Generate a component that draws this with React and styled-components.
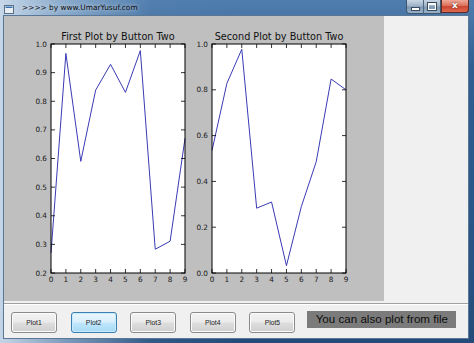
import React from 'react';
import styled, { createGlobalStyle } from 'styled-components';

const GlobalStyle = createGlobalStyle`
  html, body {
    margin: 0;
    padding: 0;
    width: 474px;
    height: 343px;
    overflow: hidden;
    background: #24507f;
  }
`;

const plots = [
  {
    title: 'First Plot by Button Two',
    min: 0.2,
    max: 1.0,
    step: 0.1,
    data: [0.27, 0.967, 0.59, 0.839, 0.929, 0.831, 0.977, 0.283, 0.311, 0.67]
  },
  {
    title: 'Second Plot by Button Two',
    min: 0,
    max: 1.0,
    step: 0.2,
    data: [0.535, 0.828, 0.977, 0.283, 0.31, 0.032, 0.29, 0.486, 0.847, 0.8]
  }
];

const buttons = ['Plot1', 'Plot2', 'Plot3', 'Plot4', 'Plot5'];

// axes geometry inside each subplot svg
const AX = { left: 18, top: 28, width: 134, height: 229 };

const Subplot = ({ title, min, max, step, data }) => {
  const sx = i => AX.left + (i / 9) * AX.width;
  const sy = v => AX.top + ((max - v) / (max - min)) * AX.height;
  const count = Math.round((max - min) / step);
  const yTicks = Array.from({ length: count + 1 }, (_, i) => min + i * step);
  const xTicks = Array.from({ length: 10 }, (_, i) => i);
  const right = AX.left + AX.width;
  const bottom = AX.top + AX.height;
  const points = data.map((v, i) => `${sx(i)},${sy(v)}`).join(' ');

  return (
    <PlotSvg width="158" height="285" viewBox="0 0 158 285">
      <rect x={AX.left} y={AX.top} width={AX.width} height={AX.height} fill="#fff" />
      <polyline points={points} fill="none" stroke="#3a3ab4" strokeWidth="1" />
      {yTicks.map(v => (
        <g key={v}>
          <line x1={AX.left} x2={AX.left + 4} y1={sy(v)} y2={sy(v)} stroke="#000" strokeWidth="0.8" />
          <line x1={right - 4} x2={right} y1={sy(v)} y2={sy(v)} stroke="#000" strokeWidth="0.8" />
          <TickText x={AX.left - 4} y={sy(v) + 2.6} textAnchor="end">
            {v.toFixed(1)}
          </TickText>
        </g>
      ))}
      {xTicks.map(i => (
        <g key={i}>
          <line x1={sx(i)} x2={sx(i)} y1={bottom} y2={bottom - 4} stroke="#000" strokeWidth="0.8" />
          <line x1={sx(i)} x2={sx(i)} y1={AX.top} y2={AX.top + 4} stroke="#000" strokeWidth="0.8" />
          <TickText x={sx(i)} y={bottom + 8.5} textAnchor="middle">
            {i}
          </TickText>
        </g>
      ))}
      <rect
        x={AX.left}
        y={AX.top}
        width={AX.width}
        height={AX.height}
        fill="none"
        stroke="#000"
        strokeWidth="1"
      />
      <TitleText x={AX.left + AX.width / 2} y={AX.top - 4} textAnchor="middle">
        {title}
      </TitleText>
    </PlotSvg>
  );
};

const AppIcon = () => (
  <svg width="10" height="9" viewBox="0 0 10 9">
    <rect x="0.5" y="0.5" width="9" height="8" fill="#e8eef4" stroke="#5a6e84" />
    <rect x="1.5" y="1.5" width="7" height="1.5" fill="#3a74b8" />
  </svg>
);

const App = () => (
  <>
    <GlobalStyle />
    <Window>
      <TitleBar>
        <AppIcon />
        <Title>&gt;&gt;&gt;&gt; by www.UmarYusuf.com</Title>
        <CaptionGroup>
          <CaptionButton>
            <MinGlyph />
          </CaptionButton>
          <CaptionButton>
            <MaxGlyph />
          </CaptionButton>
        </CaptionGroup>
        <CloseButton>x</CloseButton>
      </TitleBar>
      <Client>
        <TopRow>
          <PlotArea>
            {plots.map(p => (
              <Subplot key={p.title} {...p} />
            ))}
          </PlotArea>
          <SidePanel />
        </TopRow>
        <Divider />
        <BottomBar>
          {buttons.map(b => (
            <PushButton key={b} $focused={b === 'Plot2'}>
              {b}
            </PushButton>
          ))}
          <InfoLabel>You can also plot from file</InfoLabel>
        </BottomBar>
      </Client>
    </Window>
  </>
);

export default App;

const Window = styled.div`
  width: 474px;
  height: 343px;
  box-sizing: border-box;
  padding: 0 6px 5px 4px;
  display: flex;
  flex-direction: column;
  background:
    linear-gradient(90deg, rgba(205, 220, 236, 0.95) 0%, rgba(160, 188, 216, 0.7) 14%, rgba(90, 130, 175, 0.25) 32%, rgba(40, 80, 130, 0) 50%),
    linear-gradient(180deg, #4f7eae 0%, #2f5e92 20%, #2a5788 60%, #244c7a 100%);
`;

const TitleBar = styled.div`
  height: 16px;
  display: flex;
  align-items: flex-start;
  padding-top: 5px;
  box-sizing: border-box;
  position: relative;
`;

const Title = styled.span`
  margin-left: 8px;
  margin-top: -2px;
  font-family: 'DejaVu Sans', 'Liberation Sans', sans-serif;
  font-size: 7.4px;
  color: #0a0a0a;
  text-shadow: 0 0 4px rgba(255, 255, 255, 0.8);
  white-space: nowrap;
`;

const CaptionGroup = styled.div`
  position: absolute;
  top: 0;
  right: 27px;
  display: flex;
  height: 13px;
  border: 1px solid #3d5670;
  border-top: none;
  border-radius: 0 0 0 4px;
  overflow: hidden;
`;

const CaptionButton = styled.div`
  width: 16px;
  height: 13px;
  display: flex;
  align-items: center;
  justify-content: center;
  background: linear-gradient(180deg, #c8d6e4 0%, #9fb3c8 45%, #7f98b2 55%, #9bb2c8 100%);
  & + & {
    border-left: 1px solid #51677f;
  }
`;

const MinGlyph = styled.div`
  width: 7px;
  height: 2px;
  margin-top: 4px;
  background: #fff;
  border: 1px solid #394c60;
`;

const MaxGlyph = styled.div`
  width: 6px;
  height: 4px;
  border: 1px solid #fff;
  border-top-width: 2px;
  outline: 1px solid #394c60;
`;

const CloseButton = styled.div`
  position: absolute;
  top: 0;
  right: -1px;
  width: 28px;
  height: 13px;
  box-sizing: border-box;
  border: 1px solid #5a2a26;
  border-top: none;
  border-radius: 0 0 4px 0;
  background: linear-gradient(180deg, #efa898 0%, #dc7460 45%, #cc4530 55%, #e06a52 100%);
  color: #fff;
  font-family: 'DejaVu Sans', sans-serif;
  font-weight: bold;
  font-size: 9px;
  line-height: 11px;
  text-align: center;
  text-shadow: 0 0 2px #4a1a14;
`;

const Client = styled.div`
  flex: 1;
  display: flex;
  flex-direction: column;
  background: #f0f0f0;
  outline: 1px solid #5a7896;
`;

const TopRow = styled.div`
  height: 285px;
  display: flex;
`;

const PlotArea = styled.div`
  width: 380px;
  background: #bfbfbf;
  display: flex;
  gap: 3px;
  padding-left: 29px;
  box-sizing: border-box;
`;

const PlotSvg = styled.svg`
  display: block;
  flex-shrink: 0;
`;

const TickText = styled.text`
  font-family: 'DejaVu Sans', sans-serif;
  font-size: 7.3px;
  fill: #1a1a1a;
`;

const TitleText = styled.text`
  font-family: 'DejaVu Sans', sans-serif;
  font-size: 9.7px;
  fill: #111;
`;

const SidePanel = styled.div`
  flex: 1;
  background: #f0f0f0;
`;

const Divider = styled.div`
  margin-top: 2px;
  height: 1px;
  background: #a0a0a0;
  border-bottom: 1px solid #fff;
`;

const BottomBar = styled.div`
  flex: 1;
  display: flex;
  align-items: flex-start;
  padding: 6px 0 0 7px;
`;

const PushButton = styled.div`
  width: 46px;
  height: 21px;
  margin-top: 1px;
  margin-right: 13.6px;
  box-sizing: border-box;
  border: 1px solid ${({ $focused }) => ($focused ? '#3c7fb1' : '#8a8a8a')};
  border-radius: 3px;
  background: ${({ $focused }) =>
    $focused
      ? 'linear-gradient(180deg, #eaf6fd 0%, #d9f0fc 45%, #bee6fd 55%, #a7d9f5 100%)'
      : 'linear-gradient(180deg, #f2f2f2 0%, #ebebeb 45%, #dddddd 55%, #cfcfcf 100%)'};
  box-shadow: inset 0 0 0 1px ${({ $focused }) => ($focused ? '#c8eafa' : '#fcfcfc')};
  display: flex;
  align-items: center;
  justify-content: center;
  font-family: 'Liberation Sans', Arial, sans-serif;
  font-size: 6.8px;
  color: #1a1a1a;
`;

const InfoLabel = styled.div`
  margin-left: -1.6px;
  width: 149px;
  height: 17px;
  background: #7b7b7b;
  font-family: 'Liberation Sans', Arial, sans-serif;
  font-size: 11.6px;
  line-height: 15px;
  color: #0d0d0d;
  text-align: center;
  white-space: nowrap;
`;
